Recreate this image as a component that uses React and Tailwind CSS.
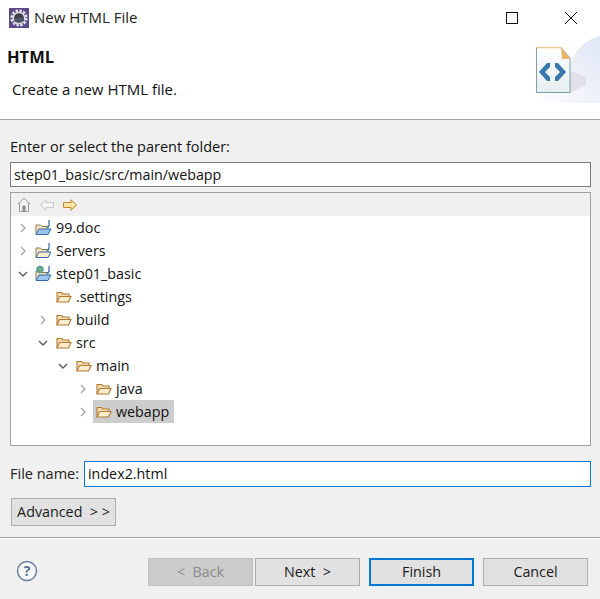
import React from "react";

const rows = [
  { name: "99.doc", indent: "pl-[7px]", arrow: "right", icon: "doc" },
  { name: "Servers", indent: "pl-[7px]", arrow: "right", icon: "plain" },
  { name: "step01_basic", indent: "pl-[7px]", arrow: "down", icon: "project" },
  { name: ".settings", indent: "pl-[27px]", arrow: "none", icon: "folder" },
  { name: "build", indent: "pl-[27px]", arrow: "right", icon: "folder" },
  { name: "src", indent: "pl-[27px]", arrow: "down", icon: "folder" },
  { name: "main", indent: "pl-[47px]", arrow: "down", icon: "folder" },
  { name: "java", indent: "pl-[67px]", arrow: "right", icon: "folder" },
  { name: "webapp", indent: "pl-[67px]", arrow: "right", icon: "folder", selected: true },
];

function Arrow({ dir }) {
  if (dir === "none") return <span className="w-[10px] shrink-0" />;
  return (
    <svg width="10" height="10" viewBox="0 0 10 10" className="shrink-0" fill="none">
      {dir === "right" ? (
        <path d="M3 1 L7 5 L3 9" stroke="#a6a6a6" strokeWidth="1.4" />
      ) : (
        <path d="M1 3 L5 7 L9 3" stroke="#5a5a5a" strokeWidth="1.4" />
      )}
    </svg>
  );
}

function Folder({ kind }) {
  if (kind === "folder") {
    return (
      <svg width="16" height="16" viewBox="0 0 16 16" className="ml-[8px] shrink-0">
        <path d="M1 13 V3.5 H5.5 L7 5 H13 V7.5" fill="#f6dcae" stroke="#b07a35" strokeWidth="1.1" />
        <path d="M1 13 L3.5 7.5 H15 L12.5 13 Z" fill="#fbeccd" stroke="#b07a35" strokeWidth="1.1" />
      </svg>
    );
  }
  return (
    <svg width="17" height="18" viewBox="0 0 17 18" className="ml-[7px] shrink-0">
      <path d="M1 15 V6 H5.5 L7 7.5 H13 V10" fill="#f8e2b8" stroke="#8a7a5c" strokeWidth="1" />
      <path d="M1 15.5 L4 10 H16 L13 15.5 Z" fill={kind === "plain" ? "#fbeccd" : "#9cc6ee"} stroke="#2f6ca8" strokeWidth="1" />
      <path d="M14 1 V6 Q14 8 11 8" fill="none" stroke="#2f6ca8" strokeWidth="1.2" />
      {kind === "project" && <circle cx="5" cy="4.5" r="3.4" fill="#6dab7c" stroke="#4a8dbd" strokeWidth="0.8" />}
    </svg>
  );
}

function TreeRow({ row }) {
  return (
    <div className={`h-[23px] flex items-center ${row.indent}`}>
      <Arrow dir={row.arrow} />
      {row.selected ? (
        <div className="ml-[5px] h-[23px] flex items-center bg-[#cdcdcd] pr-[5px]">
          <span className="-ml-[5px] flex"><Folder kind={row.icon} /></span>
          <span className="ml-[4px]">{row.name}</span>
        </div>
      ) : (
        <>
          <Folder kind={row.icon} />
          <span className="ml-[4px]">{row.name}</span>
        </>
      )}
    </div>
  );
}

function WizardButton({ children, disabled, focused }) {
  let cls = "border-[#adadad] border bg-[#e1e1e1] text-[#1a1a1a]";
  if (disabled) cls = "border-[#bfbfbf] border bg-[#cccccc] text-[#8a8a8a]";
  if (focused) cls = "border-[#0078d7] border-2 bg-[#e1e1e1] text-[#1a1a1a]";
  return <button className={`w-[105px] h-[28px] flex items-center justify-center whitespace-pre ${cls}`}>{children}</button>;
}

export default function App() {
  return (
    <div className="w-[600px] h-[599px] overflow-hidden bg-[#f0f0f0] text-[14.3px] text-[#111] font-['Open_Sans','Noto_Sans',sans-serif]">
      {/* title bar */}
      <div className="h-[35px] bg-white flex items-center">
        <svg width="20" height="20" viewBox="0 0 20 20" className="ml-[9px] shrink-0">
          <rect width="20" height="20" fill="#5b4a8a" />
          <circle cx="10" cy="10" r="7.4" fill="none" stroke="#e8e8e8" strokeWidth="2.4" strokeDasharray="2.4 1.5" />
          <circle cx="10" cy="10" r="5.6" fill="#3f3f4d" stroke="#e0e0e0" strokeWidth="1.5" />
          <path d="M5 10 H15 V13 Q10 16 5 13 Z" fill="#55556a" />
        </svg>
        <span className="ml-[5px] text-[15px] text-[#222]">New HTML File</span>
        <div className="ml-auto flex items-center">
          <svg width="12" height="12" viewBox="0 0 12 12" className="mr-[46px]">
            <rect x="0.5" y="0.5" width="11" height="11" fill="none" stroke="#111" />
          </svg>
          <svg width="14" height="14" viewBox="0 0 14 14" className="mr-[22px]">
            <path d="M1 1 L13 13 M13 1 L1 13" stroke="#111" strokeWidth="1" />
          </svg>
        </div>
      </div>

      {/* banner */}
      <div className="h-[85px] bg-white border-b border-[#a0a0a0] flex justify-between">
        <div>
          <div className="ml-[7px] mt-[12px] text-[16.5px] font-bold leading-[20px]">HTML</div>
          <div className="ml-[12px] mt-[12px] text-[15px] leading-[20px]">Create a new HTML file.</div>
        </div>
        <svg width="72" height="70" viewBox="0 0 72 70" className="shrink-0">
          <defs>
            <linearGradient id="sw" x1="0" y1="1" x2="1" y2="0">
              <stop offset="0" stopColor="#ffffff" />
              <stop offset="1" stopColor="#dfe5f5" />
            </linearGradient>
            <linearGradient id="pg" x1="0" y1="0" x2="0" y2="1">
              <stop offset="0" stopColor="#ffffff" />
              <stop offset="1" stopColor="#e6eef2" />
            </linearGradient>
          </defs>
          <path d="M0 68 Q30 60 42 28 Q52 6 72 1 V68 Z" fill="url(#sw)" />
          <path d="M42 58 L58 50 V42 L42 36 Z" fill="#d9d3de" opacity="0.6" />
          <path d="M8.5 12.5 H33 L42 23 V57.5 H8.5 Z" fill="url(#pg)" stroke="#7fa0aa" strokeWidth="1" />
          <path d="M8.5 12.5 H33" stroke="#eecb9a" strokeWidth="1.5" />
          <path d="M33 12 L42 24 H34 Z" fill="#f0b266" />
          <path d="M19 28 L11 37 L19 46 H22 V42 L17 37 L22 32 V28 Z" fill="#3a79ad" />
          <path d="M30 28 L38 37 L30 46 H27 V42 L32 37 L27 32 V28 Z" fill="#3a79ad" />
        </svg>
      </div>

      {/* body */}
      <div className="px-[10px] pt-[17px] pr-[9px]">
        <div className="text-[14.5px] leading-[20px]">Enter or select the parent folder:</div>
        <div className="mt-[5px] h-[25px] border border-[#7a7a7a] bg-white flex items-center pl-[3px]">step01_basic/src/main/webapp</div>

        <div className="mt-[5px] h-[254px] border border-[#a0a0a0] bg-white">
          <div className="h-[23px] bg-[#f0f0f0] flex items-center pl-[6px] gap-[9px]">
            <svg width="14" height="15" viewBox="0 0 14 15">
              <path d="M0.5 7.5 L7 1 L13.5 7.5 M2.5 6 V14.5 H11.5 V6" fill="#f3f3f3" stroke="#9a9a9a" strokeWidth="1" />
              <rect x="5.5" y="8.5" width="3" height="6" fill="#8a8a8a" />
            </svg>
            <svg width="14" height="12" viewBox="0 0 14 12">
              <path d="M0.5 6 L6 0.8 V3.5 H13.5 V8.5 H6 V11.2 Z" fill="#f5f5f5" stroke="#c8c8c8" strokeWidth="1" />
            </svg>
            <svg width="14" height="12" viewBox="0 0 14 12">
              <path d="M13.5 6 L8 0.8 V3.5 H0.5 V8.5 H8 V11.2 Z" fill="#fbe3a0" stroke="#b88a2a" strokeWidth="1" />
            </svg>
          </div>
          <div>
            {rows.map((row) => (
              <TreeRow key={row.name} row={row} />
            ))}
          </div>
        </div>

        <div className="mt-[15px] flex items-center h-[26px]">
          <label className="w-[74px] shrink-0 text-[14.5px] text-[#222]">File name:</label>
          <div className="flex-1 h-[26px] border border-[#0078d7] bg-white flex items-center pl-[3px]">index2.html</div>
        </div>

        <div className="mt-[11px] pl-[1px]">
          <button className="w-[105px] h-[28px] border border-[#adadad] bg-[#e1e1e1] flex items-center justify-center whitespace-pre text-[#1a1a1a]">Advanced  &gt; &gt;</button>
        </div>
      </div>

      {/* footer */}
      <div className="mt-[11px] border-t border-[#a0a0a0] shadow-[inset_0_1px_0_#fff] pt-[20px] flex items-center">
        <svg width="22" height="22" viewBox="0 0 22 22" className="ml-[16px] -mt-[2px] shrink-0">
          <circle cx="11" cy="11" r="9.5" fill="#f5f7fb" stroke="#71809b" strokeWidth="1.5" />
          <text x="11" y="16" textAnchor="middle" fontSize="14" fontWeight="700" fill="#5d6f8e" fontFamily="Open Sans">?</text>
        </svg>
        <div className="ml-[110px] flex">
          <WizardButton disabled>&lt;  Back</WizardButton>
          <div className="ml-[2px]"><WizardButton>Next  &gt;</WizardButton></div>
          <div className="ml-[9px]"><WizardButton focused>Finish</WizardButton></div>
          <div className="ml-[9px]"><WizardButton>Cancel</WizardButton></div>
        </div>
      </div>
    </div>
  );
}
